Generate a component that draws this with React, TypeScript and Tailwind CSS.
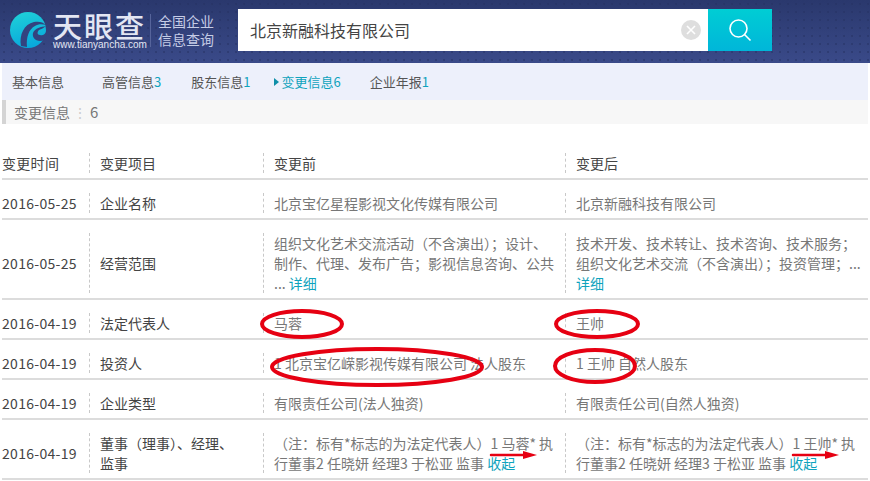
const cjk = { fontFamily: '"Noto Sans CJK SC", sans-serif' };

const columns = ['w-[87px] pl-0 tracking-[0.3px]', 'w-[174px] pl-[10px]', 'w-[302px] pl-[10px]', 'w-[302px] pl-[10px]'];

type Row = { cells: React.ReactNode[]; header?: boolean };

const Link = ({ children }: { children: React.ReactNode }) => (
  <a className="text-[#0fa3bd]">{children}</a>
);

const rows: Row[] = [
  { header: true, cells: ['变更时间', '变更项目', '变更前', '变更后'] },
  { cells: ['2016-05-25', '企业名称', '北京宝亿星程影视文化传媒有限公司', '北京新融科技有限公司'] },
  {
    cells: [
      '2016-05-25',
      '经营范围',
      <>组织文化艺术交流活动（不含演出）；设计、<br />制作、代理、发布广告；影视信息咨询、公共<br />... <Link>详细</Link></>,
      <>技术开发、技术转让、技术咨询、技术服务；<br />组织文化艺术交流（不含演出）；投资管理；...<br /><Link>详细</Link></>,
    ],
  },
  { cells: ['2016-04-19', '法定代表人', '马蓉', '王帅'] },
  { cells: ['2016-04-19', '投资人', '1 北京宝亿嵘影视传媒有限公司 法人股东', '1 王帅 自然人股东'] },
  { cells: ['2016-04-19', '企业类型', '有限责任公司(法人独资)', '有限责任公司(自然人独资)'] },
  {
    cells: [
      '2016-04-19',
      <>董事（理事）、经理、<br />监事</>,
      <>（注：标有*标志的为法定代表人）1 马蓉* 执<br />行董事2 任晓妍 经理3 于松亚 监事 <Link>收起</Link></>,
      <>（注：标有*标志的为法定代表人）1 王帅* 执<br />行董事2 任晓妍 经理3 于松亚 监事 <Link>收起</Link></>,
    ],
  },
];

function Logo() {
  return (
    <svg width="38" height="38" viewBox="0 0 38 38" className="shrink-0">
      <defs>
        <linearGradient id="logoFill" x1="0.2" y1="0" x2="0.5" y2="1">
          <stop offset="0" stopColor="#1fd0d8" />
          <stop offset="1" stopColor="#08a8dc" />
        </linearGradient>
      </defs>
      <circle cx="19" cy="19" r="18" fill="url(#logoFill)" />
      {/* swirl cut-outs in the bar colour */}
      <path d="M12 35C10 24 15 13 25 11c5-1 9 0 12 3-4-1-8-1-11 1-6 3-9 11-8 21Z" fill="#33437f" />
      <path d="M37 15c-5 1-11 2-13 7-1 4 2 8 7 8 3 0 5-1 6-3v-6c-1 2-3 4-6 3-3 0-3-3-1-5 2-1 5-2 7-4Z" fill="#33437f" />
    </svg>
  );
}

export default function App() {
  return (
    <div className="relative w-[870px] h-[481px] overflow-hidden bg-white text-[14px] leading-[20px] text-[#666]" style={cjk}>
      {/* top bar */}
      <header className="h-[63px] pb-[3px] flex items-center bg-[radial-gradient(#26326380_1px,transparent_1.5px),linear-gradient(to_bottom,#2a386d,#3a4a89)] [background-size:8px_8px,100%_100%]">
        <div className="flex items-center pl-[9px] w-[238px]">
          <Logo />
          <div className="ml-[6px] w-[92px] text-[#e3e6f3]">
            <div className="text-[29px] leading-[28px] font-medium tracking-[2px] whitespace-nowrap">天眼查</div>
            <div className="text-[10px] leading-[11px] font-['Liberation_Sans'] whitespace-nowrap">www.tianyancha.com</div>
          </div>
          <div className="ml-[5px] h-[33px] border-l border-[#56649b]" />
          <div className="ml-[7px] text-[14px] leading-[18px] text-[#c5cce6] whitespace-nowrap">全国企业<br />信息查询</div>
        </div>
        <div className="w-[470px] h-[42px] bg-white flex items-center pl-[12px] pr-[7px] text-[#444] text-[16px]">
          <span className="flex-1">北京新融科技有限公司</span>
          <span className="w-[20px] h-[20px] rounded-full bg-[#dedede] flex items-center justify-center">
            <svg width="10" height="10" viewBox="0 0 10 10"><path d="M1 1l8 8M9 1l-8 8" stroke="#fff" strokeWidth="1.6" /></svg>
          </span>
        </div>
        <div className="w-[64px] h-[42px] bg-gradient-to-b from-[#00cdd4] to-[#00b6d9] flex items-center justify-center">
          <svg width="24" height="24" viewBox="0 0 24 24" fill="none" stroke="#fff" strokeWidth="1.6">
            <circle cx="10.5" cy="10.5" r="8.5" />
            <path d="M16.5 16.5l6 6" />
          </svg>
        </div>
      </header>

      <div className="ml-[2px] mr-[2px]">
        {/* tabs */}
        <nav className="h-[37px] flex items-center bg-[#edf0fb] pl-[10px] text-[13px] text-[#555]">
          <span>基本信息</span>
          <span className="ml-[38px]">高管信息<span className="text-[#0fa3bd]">3</span></span>
          <span className="ml-[30px]">股东信息<span className="text-[#0fa3bd]">1</span></span>
          <span className="ml-[24px] mr-[2px] w-0 h-0 border-y-[4px] border-y-transparent border-l-[5px] border-l-[#0f8fa8]" />
          <span className="text-[#0fa3bd]">变更信息6</span>
          <span className="ml-[29px]">企业年报<span className="text-[#0fa3bd]">1</span></span>
        </nav>

        {/* section title */}
        <div className="h-[24px] flex items-center bg-[#f7f7f7] border-l-[4px] border-[#d4d4d4] pl-[8px] text-[#777]">
          变更信息<span className="mx-[3px] text-[#ccc]">⋮</span><span className="text-[15px]">6</span>
        </div>

        {/* change table */}
        <div className="mt-[16px]">
          {rows.map((row, i) => (
            <div key={i} className="flex pt-[13px] pb-[5px] border-b-2 border-[#dcdcdc]">
              {row.cells.map((cell, j) => (
                <div
                  key={j}
                  className={`${columns[j]} shrink-0 flex items-center ${j > 0 ? 'border-l border-dashed border-[#c8c8c8]' : ''} ${row.header || j < 2 ? 'text-[#444]' : 'text-[#777]'}`}
                >
                  <div className="whitespace-nowrap">{cell}</div>
                </div>
              ))}
            </div>
          ))}
        </div>
      </div>

      {/* red marker annotations drawn on top of the screenshot */}
      <svg className="absolute inset-0 pointer-events-none" width="870" height="481" fill="none" stroke="#e60012" strokeWidth="4">
        <ellipse cx="302" cy="324" rx="40" ry="13" />
        <ellipse cx="377" cy="367" rx="105" ry="18" />
        <ellipse cx="597" cy="324" rx="41" ry="13" />
        <ellipse cx="595" cy="366" rx="40" ry="16" />
        <path d="M491 455h34M793 455h34" strokeWidth="2.5" strokeLinecap="round" />
        <path d="M523 451l14 4-14 4ZM825 451l14 4-14 4Z" fill="#e60012" stroke="none" />
      </svg>
    </div>
  );
}
